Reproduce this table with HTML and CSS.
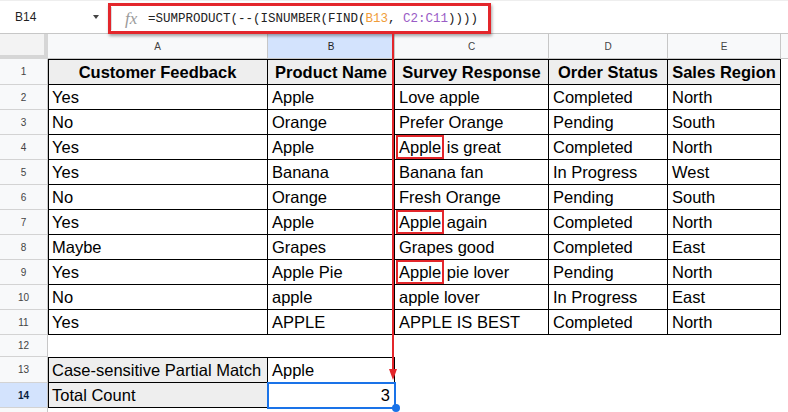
FILE: index.html
```html
<!DOCTYPE html>
<html>
<head>
<meta charset="utf-8">
<link rel="stylesheet" href="styles.css">
</head>
<body>
<div class="toolbar">
  <div class="namebox"><span class="nb-text">B14</span><span class="caret"></span></div>
  <div class="fbox">
    <span class="sep"></span>
    <span class="fx">fx</span>
    <span class="formula">=SUMPRODUCT(--(ISNUMBER(FIND(<span class="r1">B13</span>, <span class="r2">C2:C11</span>))))</span>
  </div>
</div>
<div class="sheet">
  <div class="corner"></div>
  <div class="ch">A</div>
  <div class="ch sel">B</div>
  <div class="ch">C</div>
  <div class="ch">D</div>
  <div class="ch">E</div>
  <div class="ch rest"></div>

  <div class="rh">1</div>
  <div class="c first top hd">Customer Feedback</div>
  <div class="c top hd">Product Name</div>
  <div class="c top hd">Survey Response</div>
  <div class="c top hd">Order Status</div>
  <div class="c top hd">Sales Region</div>
  <div class="e"></div>

  <div class="rh">2</div>
  <div class="c first">Yes</div><div class="c">Apple</div><div class="c">Love apple</div><div class="c">Completed</div><div class="c">North</div><div class="e"></div>

  <div class="rh">3</div>
  <div class="c first">No</div><div class="c">Orange</div><div class="c">Prefer Orange</div><div class="c">Pending</div><div class="c">South</div><div class="e"></div>

  <div class="rh">4</div>
  <div class="c first">Yes</div><div class="c">Apple</div><div class="c"><span class="txt"><span class="hl">Apple</span> is great</span></div><div class="c">Completed</div><div class="c">North</div><div class="e"></div>

  <div class="rh">5</div>
  <div class="c first">Yes</div><div class="c">Banana</div><div class="c">Banana fan</div><div class="c">In Progress</div><div class="c">West</div><div class="e"></div>

  <div class="rh">6</div>
  <div class="c first">No</div><div class="c">Orange</div><div class="c">Fresh Orange</div><div class="c">Pending</div><div class="c">South</div><div class="e"></div>

  <div class="rh">7</div>
  <div class="c first">Yes</div><div class="c">Apple</div><div class="c"><span class="txt"><span class="hl">Apple</span> again</span></div><div class="c">Completed</div><div class="c">North</div><div class="e"></div>

  <div class="rh">8</div>
  <div class="c first">Maybe</div><div class="c">Grapes</div><div class="c">Grapes good</div><div class="c">Completed</div><div class="c">East</div><div class="e"></div>

  <div class="rh">9</div>
  <div class="c first">Yes</div><div class="c">Apple Pie</div><div class="c"><span class="txt"><span class="hl">Apple</span> pie lover</span></div><div class="c">Pending</div><div class="c">North</div><div class="e"></div>

  <div class="rh">10</div>
  <div class="c first">No</div><div class="c">apple</div><div class="c">apple lover</div><div class="c">In Progress</div><div class="c">East</div><div class="e"></div>

  <div class="rh">11</div>
  <div class="c first">Yes</div><div class="c">APPLE</div><div class="c">APPLE IS BEST</div><div class="c">Completed</div><div class="c">North</div><div class="e"></div>

  <div class="rh">12</div>
  <div class="e"></div><div class="e"></div><div class="e"></div><div class="e"></div><div class="e"></div><div class="e"></div>

  <div class="rh">13</div>
  <div class="c first top gray">Case-sensitive Partial Match</div><div class="c top">Apple</div><div class="e"></div><div class="e"></div><div class="e"></div><div class="e"></div>

  <div class="rh rsel">14</div>
  <div class="c first gray">Total Count</div><div class="c num active">3<span class="dot"></span></div><div class="e"></div><div class="e"></div><div class="e"></div><div class="e"></div>

  <div class="rh last"></div>
  <div class="e"></div><div class="e"></div><div class="e"></div><div class="e"></div><div class="e"></div><div class="e"></div>
</div>
<div class="arrow"><div class="shaft"></div><div class="head"></div></div>
</body>
</html>
```

FILE: styles.css
```css
html, body {
  margin: 0;
  padding: 0;
  background: #ffffff;
  width: 788px;
  height: 412px;
  overflow: hidden;
  font-family: "Liberation Sans", Arial, sans-serif;
  position: relative;
}

.toolbar {
  height: 34px;
  box-sizing: border-box;
  border-top: 1px solid #eeeeee;
  border-bottom: 1px solid #c7c7c7;
  display: flex;
  background: #ffffff;
}

.namebox {
  width: 108px;
  box-sizing: border-box;
  padding-left: 15px;
  display: flex;
  align-items: center;
  font-size: 12px;
  color: #1f1f1f;
}

.caret {
  margin-left: auto;
  margin-right: 9px;
  width: 0;
  height: 0;
  border-left: 3.5px solid transparent;
  border-right: 3.5px solid transparent;
  border-top: 4px solid #444444;
}

.fbox {
  width: 383px;
  height: 31px;
  margin-top: 2px;
  box-sizing: border-box;
  border: 3px solid #e3262b;
  display: flex;
  align-items: center;
  background: #ffffff;
  box-shadow: 1px 2px 3px rgba(0, 0, 0, 0.35);
  position: relative;
  z-index: 2;
}

.sep {
  width: 1px;
  height: 23px;
  background: #dadce0;
}

.fx {
  margin-left: 13px;
  width: 23px;
  font-family: "Liberation Serif", serif;
  font-style: italic;
  font-size: 17px;
  color: #9a9a9a;
}

.formula {
  font-family: "Liberation Mono", monospace;
  font-size: 12.5px;
  color: #222222;
  white-space: nowrap;
}

.r1 { color: #f09d3a; }
.r2 { color: #9a5cc6; }

.sheet {
  display: grid;
  grid-template-columns: 48px 220px 127px 154px 119px 113px 1fr;
  grid-template-rows: 25px 26px repeat(10, 25px) 22px 26px 25px 4px;
}

.sheet > div {
  box-sizing: border-box;
  min-width: 0;
}

.corner {
  background: #f3f3f3;
  border-right: 4px solid #d6d6d6;
  border-bottom: 4px solid #d6d6d6;
}

.ch {
  background: #f8f9fa;
  border-right: 1px solid #c7c7c7;
  border-bottom: 1px solid #c7c7c7;
  font-size: 10px;
  color: #444444;
  display: flex;
  align-items: center;
  justify-content: center;
}

.ch.sel {
  background: #d3e3fd;
  color: #1f1f1f;
}

.ch.rest {
  border-right: none;
}

.rh {
  background: #f8f9fa;
  border-right: 1px solid #c7c7c7;
  border-bottom: 1px solid #d3d3d3;
  font-size: 10px;
  color: #444444;
  display: flex;
  align-items: center;
  justify-content: center;
}

.rh.last {
  border-bottom: none;
}

.rh.rsel {
  background: #d3e3fd;
  color: #0b1f3f;
  font-weight: bold;
}

.c {
  border-right: 1px solid #000000;
  border-bottom: 1px solid #000000;
  padding: 0 4px;
  font-size: 16.5px;
  color: #000000;
  white-space: nowrap;
  display: flex;
  align-items: center;
  background: #ffffff;
}

.c.first {
  border-left: 1px solid #000000;
  padding-left: 3px;
}

.c.top {
  border-top: 1px solid #000000;
}

.c.hd {
  font-weight: bold;
  justify-content: center;
  background: #eeeeee;
}

.c.gray {
  background: #eeeeee;
}

.c.num {
  justify-content: flex-end;
}

.c.active {
  position: relative;
  outline: 2px solid #1a73e8;
  outline-offset: -1px;
}

.dot {
  position: absolute;
  right: -6px;
  bottom: -5px;
  width: 8px;
  height: 8px;
  border-radius: 50%;
  background: #1a73e8;
  z-index: 3;
}

.e {
  background: #ffffff;
}

.hl {
  outline: 2px solid #e3262b;
  padding: 1px 1px;
  margin-left: -1px;
}

.arrow {
  position: absolute;
  left: 392px;
  top: 33px;
  width: 2px;
  height: 348px;
  z-index: 4;
}

.shaft {
  width: 2px;
  height: 337px;
  background: #e3262b;
}

.head {
  position: absolute;
  left: -3px;
  top: 336px;
  width: 0;
  height: 0;
  border-left: 4px solid transparent;
  border-right: 4px solid transparent;
  border-top: 11px solid #e3262b;
}
```
